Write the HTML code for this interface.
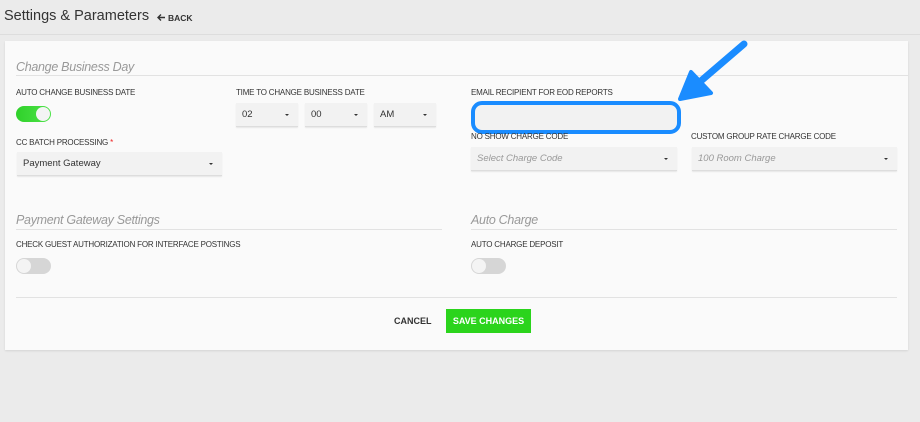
<!DOCTYPE html>
<html><head><style>
body{margin:0;width:920px;height:422px;background:#ebebeb;font-family:"Liberation Sans",sans-serif;position:relative;overflow:hidden;color:#333}
.a{position:absolute;white-space:nowrap}
.lbl{font-size:8px;color:#333;letter-spacing:-0.2px}
.h{font-size:12.5px;font-style:italic;color:#999;letter-spacing:-0.3px}
.sel{position:absolute;background:#f2f2f2;border-bottom:1px solid #ddd;box-shadow:0 1px 1px rgba(0,0,0,.08);font-size:9.5px;line-height:23px;padding-left:6px;box-sizing:border-box;height:24px}
.sel:after{content:"";position:absolute;right:9px;top:11px;border:2px solid transparent;border-top:2.5px solid #333}
.line{position:absolute;height:1px;background:#e2e2e2}
.tg{position:absolute;width:35px;height:16px;border-radius:8px;background:#d6d6d6}
.tg i{position:absolute;left:1px;top:1px;width:14px;height:14px;border-radius:50%;background:#f4f4f4}
</style></head><body>
<div class="a" style="left:4px;top:8px;font-size:14.5px;color:#333">Settings &amp; Parameters</div>
<svg class="a" style="left:157px;top:14px" width="8" height="7"><path d="M1 3.5 H8 M4 0.5 L1 3.5 L4 6.5" stroke="#333" stroke-width="1.4" fill="none"/></svg>
<div class="a" style="left:168px;top:13px;font-size:8.5px;font-weight:bold;color:#333">BACK</div>
<div class="line" style="left:0;top:34px;width:920px;background:#ddd"></div>
<div class="a" style="left:5px;top:41px;width:903px;height:309px;background:#fafafa;box-shadow:0 1px 2px rgba(0,0,0,.1)"></div>

<div class="a h" style="left:16px;top:60px">Change Business Day</div>
<div class="line" style="left:16px;top:75px;width:892px"></div>
<div class="a lbl" style="left:16px;top:88px">AUTO CHANGE BUSINESS DATE</div>
<div class="tg" style="left:16px;top:106px;background:linear-gradient(90deg,#2fd12a,#4fe34a)"><i style="left:20px"></i></div>
<div class="a lbl" style="left:236px;top:88px">TIME TO CHANGE BUSINESS DATE</div>
<div class="sel" style="left:236px;top:103px;width:62px">02</div>
<div class="sel" style="left:305px;top:103px;width:62px">00</div>
<div class="sel" style="left:374px;top:103px;width:62px">AM</div>
<div class="a lbl" style="left:16px;top:138px">CC BATCH PROCESSING <span style="color:#e22">*</span></div>
<div class="sel" style="left:17px;top:152px;width:205px">Payment Gateway</div>

<div class="a lbl" style="left:471px;top:88px">EMAIL RECIPIENT FOR EOD REPORTS</div>
<div class="a" style="left:471px;top:101px;width:202px;height:25px;border:4px solid #1a8cff;border-radius:11px;background:#f2f2f2"></div>
<div class="a lbl" style="left:471px;top:132px">NO SHOW CHARGE CODE</div>
<div class="sel" style="left:471px;top:147px;width:206px;color:#999;font-style:italic">Select Charge Code</div>
<div class="a lbl" style="left:691px;top:132px">CUSTOM GROUP RATE CHARGE CODE</div>
<div class="sel" style="left:692px;top:147px;width:205px;color:#999;font-style:italic">100 Room Charge</div>

<svg class="a" style="left:660px;top:35px" width="100" height="70"><path d="M84 9 L42 45" stroke="#1a8cff" stroke-width="7" stroke-linecap="round"/><path d="M20 64 L31 37 L51 58 Z" fill="#1a8cff" stroke="#1a8cff" stroke-width="4" stroke-linejoin="round"/></svg>

<div class="a h" style="left:16px;top:213px">Payment Gateway Settings</div>
<div class="line" style="left:16px;top:229px;width:426px"></div>
<div class="a lbl" style="left:16px;top:240px">CHECK GUEST AUTHORIZATION FOR INTERFACE POSTINGS</div>
<div class="tg" style="left:16px;top:258px"><i></i></div>
<div class="a h" style="left:471px;top:213px">Auto Charge</div>
<div class="line" style="left:471px;top:229px;width:426px"></div>
<div class="a lbl" style="left:471px;top:240px">AUTO CHARGE DEPOSIT</div>
<div class="tg" style="left:471px;top:258px"><i></i></div>

<div class="line" style="left:16px;top:297px;width:881px"></div>
<div class="a" style="left:394px;top:316px;font-size:9px;font-weight:bold;color:#333">CANCEL</div>
<div class="a" style="left:446px;top:309px;width:85px;height:24px;background:#2bd41c;color:#fff;font-size:9px;font-weight:bold;text-align:center;line-height:24px">SAVE CHANGES</div>
</body></html>
